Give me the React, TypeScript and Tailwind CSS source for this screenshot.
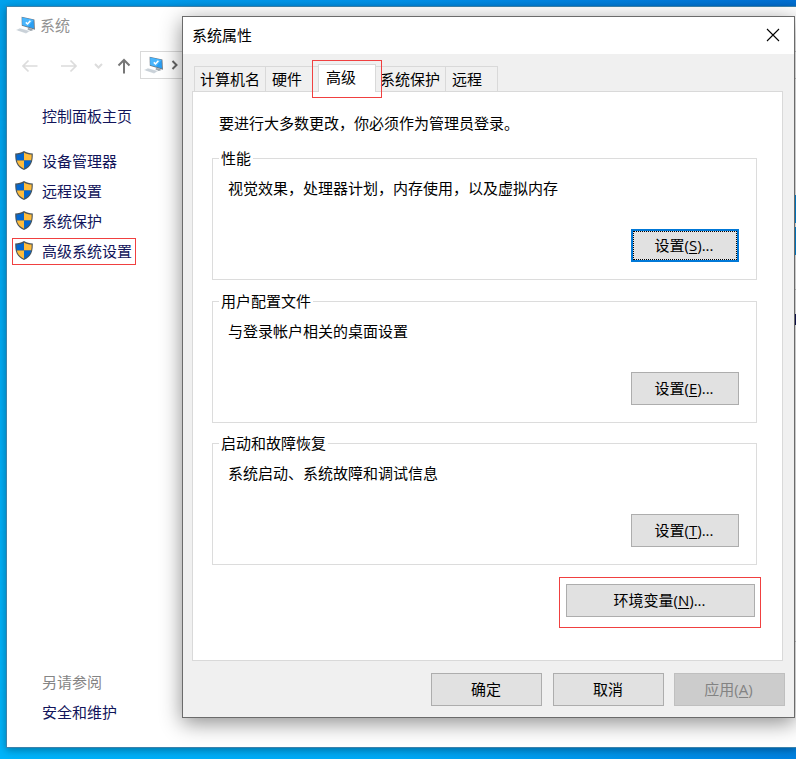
import React from "react";

const Computer = () => (
  <svg width="20" height="18" viewBox="0 0 20 18" className="shrink-0">
    <path d="M5.6 0.8 L18.4 3.6 L19 13.8 L5.8 9.8 Z" fill="#6f7a84" />
    <path d="M6.2 1.6 L17.6 4.1 L18 12.5 L6.4 9.1 Z" fill="#2a9ff4" />
    <path d="M6.2 1.6 L17.6 4.1 L12 10.6 L6.4 9.1 Z" fill="#4bb6fc" />
    <path d="M9.8 6.4 L11.5 8 L14.4 4.8" fill="none" stroke="#fff" strokeWidth="1.5" />
    <path d="M12 12 L15 12.6 L17.5 14 L14.8 15 L11.5 13.6 Z" fill="#9aa3ab" />
    <path d="M0 14 L4 12.2 L14 15 L10 17.6 Z" fill="#d3dae0" />
    <path d="M3.3 13.2 L11.9 15.6 M1.9 13.9 L10.7 16.4" stroke="#bcc5cd" strokeWidth="0.5" />
  </svg>
);

const Shield = () => (
  <svg width="20" height="21" viewBox="0 0 20 21" className="shrink-0">
    <path d="M10 1 C7.5 2.8 4.5 3.3 1.2 3.4 C1.1 11.5 2.5 16.5 10 20 C17.5 16.5 18.9 11.5 18.8 3.4 C15.5 3.3 12.5 2.8 10 1 Z" fill="#4b555a" />
    <path d="M9.9 2.4 C7.8 3.8 5.3 4.4 2.4 4.5 C2.3 6.5 2.4 8.5 2.8 10.5 H9.9 Z" fill="#0467cf" />
    <path d="M10 2.4 C12.2 3.8 14.7 4.4 17.6 4.5 C17.7 6.5 17.6 8.5 17.2 10.5 H10 Z" fill="#ffbc3b" />
    <path d="M2.8 10.5 H10 V18.7 C5.8 16.7 3.6 14.2 2.8 10.5 Z" fill="#ffbc3b" />
    <path d="M17.2 10.5 H10 V18.7 C14.2 16.7 16.4 14.2 17.2 10.5 Z" fill="#0467cf" />
  </svg>
);

const sideLinks = ["设备管理器", "远程设置", "系统保护", "高级系统设置"];

const groups = [
  { title: "性能", text: "视觉效果，处理器计划，内存使用，以及虚拟内存", key: "S", gap: "mt-[66px]", focus: true },
  { title: "用户配置文件", text: "与登录帐户相关的桌面设置", key: "E", gap: "mt-[21px]", focus: false },
  { title: "启动和故障恢复", text: "系统启动、系统故障和调试信息", key: "T", gap: "mt-5", focus: false },
];

function Label({ text, hot, tail = "" }: { text: string; hot: string; tail?: string }) {
  return (
    <span className="mb-px mr-0.5 whitespace-pre leading-5">
      {text}(<span className="underline underline-offset-2">{hot}</span>){tail}
    </span>
  );
}

function SystemWindow() {
  return (
    <div className="absolute left-1.5 top-1.5 flex h-[742px] w-[790px] justify-between border-y border-l border-[#3c82ab] bg-white shadow-[0_2px_8px_rgba(0,0,0,0.35)]">
      <div className="w-[180px]">
        <div className="flex h-9 items-center gap-1 pl-[9px] text-[#929292]">
          <Computer />
          <span className="-mt-px">系统</span>
        </div>
        <div className="mt-2 flex h-[28px] items-center text-[#dcdcdc]">
          <svg width="100" height="28" viewBox="0 0 100 28" fill="none" stroke="currentColor" strokeWidth="1.7" className="shrink-0">
            <path d="M16 15 H30.5 M21.5 9.5 L16 15 L21.5 20.5 M54 15 H69 M63.5 9.5 L69 15 L63.5 20.5" />
            <path d="M88 13 L91.5 16.5 L95 13" strokeWidth="2" />
          </svg>
          <svg width="33" height="28" viewBox="0 0 33 28" fill="none" stroke="#777" strokeWidth="2" className="shrink-0">
            <path d="M17 22.5 V9 M11.5 14.5 L17 9 L22.5 14.5" />
          </svg>
          <div className="flex h-[28px] w-[50px] shrink-0 items-center border border-[#d9d9d9] pl-[3px]">
            <Computer />
            <svg width="14" height="14" viewBox="0 0 14 14" fill="none" stroke="#666" strokeWidth="2" className="ml-1 shrink-0">
              <path d="M4.5 3 L8.5 7 L4.5 11" />
            </svg>
          </div>
        </div>
        <div className="ml-[35px] mt-[27px] h-5 leading-5 text-[#11145a]">控制面板主页</div>
        <div className="ml-[5px] mt-5 text-[#11145a]">
          {sideLinks.map((s, i) => (
            <div key={s} className="flex h-[30px] items-center">
              <div className={i === 3 ? "flex h-[27px] w-[124px] items-center gap-2 border border-[#f04040] pl-px" : "flex h-[27px] items-center gap-2 pl-0.5"}>
                <div className="-mt-0.5">
                  <Shield />
                </div>
                <span className="whitespace-nowrap leading-5">{s}</span>
              </div>
            </div>
          ))}
        </div>
        <div className="ml-[35px] mt-[401px] h-[30px] leading-[30px] text-[#858585]">另请参阅</div>
        <div className="ml-[35px] h-[30px] leading-[30px] text-[#11145a]">安全和维护</div>
      </div>
      <div className="flex w-px flex-col">
        <div className="mt-11 h-[28px] border-y border-[#ccc]" />
        <div className="mt-[116px] h-7 bg-[#0090e8]" />
        <div className="mt-1 h-7 bg-[#0090e8]" />
        <div className="mt-[34px] h-px bg-[#ccc]" />
        <div className="mt-6 h-[11px] bg-[#11145a]" />
        <div className="mt-[316px] h-px bg-[#ccc]" />
      </div>
    </div>
  );
}

function Dialog() {
  const tab = "flex h-[25px] items-center border-t border-r border-[#d9d9d9] bg-[#f0f0f0]";
  const action = "flex h-[33px] w-[111px] items-center justify-center border border-[#adadad] bg-[#e1e1e1] pb-0.5 pr-px";
  return (
    <div className="absolute left-[182px] top-4 h-[702px] w-[613px] border border-[#6b6b6b] bg-[#f0f0f0] shadow-[0_5px_20px_rgba(0,0,0,0.45)]">
      <div className="flex h-[37px] items-center justify-between bg-white pb-0.5 pl-[9px] pr-[14px]">
        <span>系统属性</span>
        <svg width="14" height="14" viewBox="0 0 14 14" stroke="#000" strokeWidth="1.1">
          <path d="M1 1 L13 13 M13 1 L1 13" />
        </svg>
      </div>
      <div className="flex h-[37px] items-end whitespace-nowrap pl-[11px]">
        <div className={`${tab} w-[72px] border-l pl-[5px]`}>计算机名</div>
        <div className={`${tab} w-[52px] border-r-0 pl-1.5`}>硬件</div>
        <div className="relative z-10 -mb-px flex h-7 w-[58px] items-center border-x border-t border-[#d9d9d9] bg-white pb-1 pl-[7px]">高级</div>
        <div className={`${tab} w-[70px] pl-1`}>系统保护</div>
        <div className={`${tab} w-[52px] pl-1.5`}>远程</div>
      </div>
      <div className="absolute left-[129px] top-[43px] z-20 h-[38px] w-[70px] border border-[#f04040]" />
      <div className="ml-[9px] h-[570px] w-[591px] border border-[#d9d9d9] bg-white pl-[19px]">
        <div className="h-0">
          <div className="ml-[7px] pt-[21px] leading-5">要进行大多数更改，你必须作为管理员登录。</div>
        </div>
        {groups.map((g) => (
          <div key={g.key} className={`${g.gap} flex h-[122px] w-[545px] flex-col border border-[#dcdcdc]`}>
            <div className="-mt-[11px] ml-1.5 self-start bg-white px-0.5 leading-5">{g.title}</div>
            <div className="ml-[15px] mt-2.5 leading-5">{g.text}</div>
            <div
              className={`mr-[17px] mt-[31px] flex h-[33px] w-[108px] items-center justify-center self-end bg-[#e1e1e1] ${g.focus ? "border-2 border-[#0078d7]" : "border border-[#adadad]"}`}
            >
              <div className={g.focus ? "flex h-full w-full items-center justify-center border border-dotted border-black" : "flex"}>
                <Label text="设置" hot={g.key} tail="..." />
              </div>
            </div>
          </div>
        ))}
        <div className="ml-[347px] mt-3 h-[51px] w-[202px] border border-[#f04040] px-1.5 pt-1.5">
          <div className="flex h-[33px] w-[189px] items-center justify-center border border-[#adadad] bg-[#e1e1e1]">
            <Label text="环境变量" hot="N" tail="..." />
          </div>
        </div>
      </div>
      <div className="mt-3 flex pl-[248px]">
        <div className={action}>确定</div>
        <div className={`${action} ml-[11px]`}>取消</div>
        <div className="ml-2.5 flex h-[33px] w-[111px] items-center justify-center border border-[#bfbfbf] bg-[#cccccc] text-[#838383]">
          <Label text="应用" hot="A" />
        </div>
      </div>
    </div>
  );
}

export default function App() {
  return (
    <div className="relative h-[759px] w-[796px] overflow-hidden bg-linear-to-r from-[#00a2ed] via-[#0092ea] to-[#0070d4] font-['Open_Sans','Noto_Sans_CJK_SC',sans-serif] text-[15px] leading-5 text-black">
      <div className="h-full bg-linear-to-r from-[#00b4fa] via-[#00a8f4] to-[#0082e0] mask-t-from-0% mask-t-to-100%" />
      <SystemWindow />
      <Dialog />
    </div>
  );
}
